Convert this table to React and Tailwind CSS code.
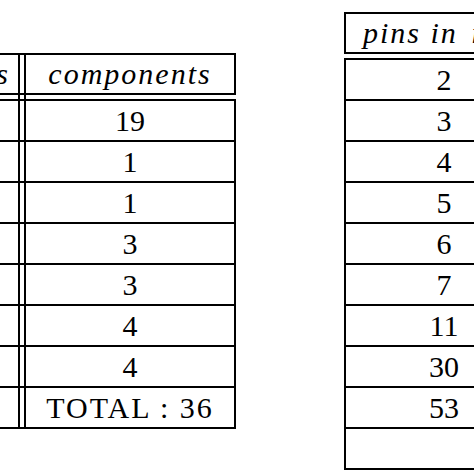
import React from "react";

const LEFT = ["19", "1", "1", "3", "3", "4", "4", "TOTAL : 36"];
const RIGHT = ["2", "3", "4", "5", "6", "7", "11", "30", "53", ""];

function LeftRow({ value, first }) {
  return (
    <div
      className={
        "flex border-b-2 border-black " +
        (first ? "border-t-2 h-[43px]" : "h-[41px]")
      }
    >
      <div className="w-[170px] shrink-0 border-r-2 border-black" />
      <div className="w-[4px] shrink-0" />
      <div
        className={
          "w-[212px] shrink-0 border-x-2 border-black flex items-center justify-center text-[30px] " +
          (value.startsWith("TOTAL") ? "tracking-[2px]" : "")
        }
      >
        {value}
      </div>
    </div>
  );
}

function RightRow({ value, first }) {
  return (
    <div
      className={
        "flex border-b-2 border-black " +
        (first ? "border-t-2 h-[43px]" : "h-[41px]")
      }
    >
      <div className="w-[200px] shrink-0 border-x-2 border-black flex items-center justify-center text-[30px]">
        {value}
      </div>
    </div>
  );
}

export default function App() {
  return (
    <div className="w-[474px] h-[474px] overflow-hidden bg-white text-black [font-family:'Liberation_Serif','Times_New_Roman',serif] leading-none">
      <div className="flex items-start">
        {/* Left table */}
        <div className="shrink-0 ml-[-150px] mt-[53px] flex flex-col">
          <div className="flex h-[42px] border-y-2 border-black">
            <div className="w-[170px] shrink-0 border-r-2 border-black flex items-center justify-end pr-[8px] italic text-[30px] tracking-[2px]">
              pins
            </div>
            <div className="w-[4px] shrink-0" />
            <div className="w-[212px] shrink-0 border-x-2 border-black flex items-center justify-center italic text-[30px] tracking-[2px]">
              components
            </div>
          </div>
          <div className="flex h-[4px]">
            <div className="w-[170px] shrink-0 border-r-2 border-black" />
            <div className="w-[4px] shrink-0" />
            <div className="w-[212px] shrink-0 border-l-2 border-black" />
          </div>
          {LEFT.map((v, i) => (
            <LeftRow key={i} value={v} first={i === 0} />
          ))}
        </div>

        {/* Right table */}
        <div className="shrink-0 ml-[108px] mt-[12px] flex flex-col">
          <div className="flex h-[42px] border-y-2 border-black">
            <div className="w-[200px] shrink-0 border-x-2 border-black flex items-center justify-start pl-[17px] italic text-[30px] tracking-[2px] whitespace-nowrap">
              <span>pins in</span>
              <span className="ml-[14px]">net</span>
            </div>
          </div>
          <div className="h-[4px]" />
          {RIGHT.map((v, i) => (
            <RightRow key={i} value={v} first={i === 0} />
          ))}
        </div>
      </div>
    </div>
  );
}
